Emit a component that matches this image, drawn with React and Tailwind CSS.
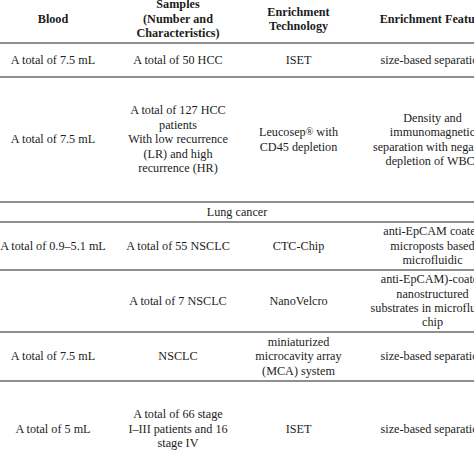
export default function App() {
  const rows = [
    {
      h: "h-[34px]",
      cells: ["A total of 7.5 mL", "A total of 50 HCC", "ISET", "size-based separation"],
    },
    {
      h: "h-[125px]",
      cells: [
        "A total of 7.5 mL",
        ["A total of 127 HCC", "patients", "With low recurrence", "(LR) and high", "recurrence (HR)"],
        [
          <span key="l">
            Leucosep<sup className="text-[10px] relative -top-[1px]">®</sup> with
          </span>,
          "CD45 depletion",
        ],
        ["Density and", "immunomagnetic", "separation with negative", "depletion of WBCs"],
      ],
    },
    { section: "Lung cancer" },
    {
      h: "h-[48px]",
      cells: [
        "A total of 0.9–5.1 mL",
        "A total of 55 NSCLC",
        "CTC-Chip",
        ["anti-EpCAM coated", "microposts based", "microfluidic"],
      ],
    },
    {
      h: "h-[62px]",
      cells: [
        "",
        "A total of 7 NSCLC",
        "NanoVelcro",
        ["anti-EpCAM)-coated", "nanostructured", "substrates in microfluidic", "chip"],
      ],
    },
    {
      h: "h-[49px]",
      cells: [
        "A total of 7.5 mL",
        "NSCLC",
        ["miniaturized", "microcavity array", "(MCA) system"],
        "size-based separation",
      ],
    },
    {
      h: "h-[94px]",
      last: true,
      cells: [
        "A total of 5 mL",
        ["A total of 66 stage", "I–III patients and 16", "stage IV"],
        "ISET",
        "size-based separation",
      ],
    },
  ];

  const widths = ["w-[106px]", "w-[144px]", "w-[97px]", "w-[171px]"];

  const renderCell = (content) =>
    Array.isArray(content)
      ? content.map((line, i) => (
          <div key={i} className="whitespace-nowrap">
            {line}
          </div>
        ))
      : <div className="whitespace-nowrap">{content}</div>;

  return (
    <div
      className="w-[474px] h-[474px] overflow-hidden bg-white text-[#1c1c1c] text-[12.2px] leading-[14.4px]"
      style={{ fontFamily: '"Liberation Serif", "Times New Roman", serif' }}
    >
      <div className="w-[518px]">
        <div className="flex h-[44px] border-b-2 border-[#8f8f8f] font-bold pb-[4px]">
          <div className={`${widths[0]} flex items-center justify-center text-center`}>Blood</div>
          <div className={`${widths[1]} flex flex-col items-center justify-center text-center`}>
            <div>Samples</div>
            <div>(Number and</div>
            <div>Characteristics)</div>
          </div>
          <div className={`${widths[2]} flex flex-col items-center justify-center text-center`}>
            <div>Enrichment</div>
            <div>Technology</div>
          </div>
          <div className={`${widths[3]} flex items-center justify-center text-center whitespace-nowrap`}>
            Enrichment Feature
          </div>
        </div>

        {rows.map((row, i) =>
          row.section ? (
            <div
              key={i}
              className="h-[20px] border-b-2 border-[#8f8f8f] flex items-center justify-center pr-[44px]"
            >
              {row.section}
            </div>
          ) : (
            <div
              key={i}
              className={`flex ${row.h} ${row.last ? "" : "border-b-2 border-[#8f8f8f]"}`}
            >
              {row.cells.map((c, j) => (
                <div
                  key={j}
                  className={`${widths[j]} shrink-0 flex flex-col items-center justify-center text-center`}
                >
                  {renderCell(c)}
                </div>
              ))}
            </div>
          )
        )}
      </div>
    </div>
  );
}
